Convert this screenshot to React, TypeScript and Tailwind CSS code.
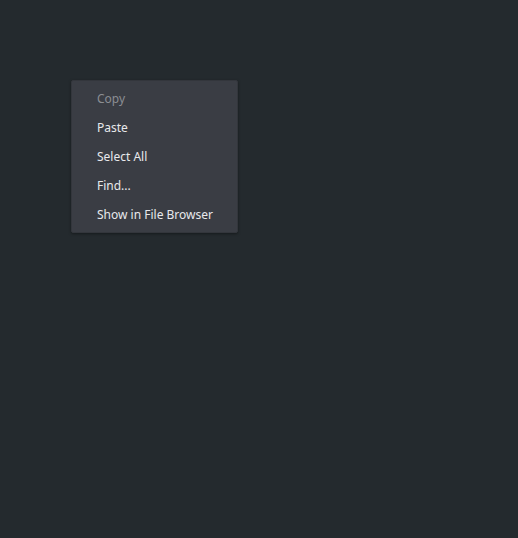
import React from 'react';

const items = [
  { label: 'Copy', disabled: true },
  { label: 'Paste' },
  { label: 'Select All' },
  { label: 'Find...' },
  { label: 'Show in File Browser' },
];

export default function App() {
  return (
    <div
      className="min-h-[538px] bg-[#242a2e] pt-[80px] pl-[71px]"
      style={{ fontFamily: '"Noto Sans", "Open Sans", sans-serif' }}
    >
      {/* Context menu */}
      <div className="w-[167px] py-[3px] bg-[#3a3d44] border border-[#33363c] rounded-[2px] shadow-[0_1px_3px_rgba(0,0,0,0.4)]">
        {items.map((item) => (
          <div
            key={item.label}
            className={`h-[29px] flex items-center pl-[25px] text-[12px] ${
              item.disabled ? 'text-[#8b8e93]' : 'text-[#e8e9ec]'
            }`}
          >
            {item.label}
          </div>
        ))}
      </div>
    </div>
  );
}
